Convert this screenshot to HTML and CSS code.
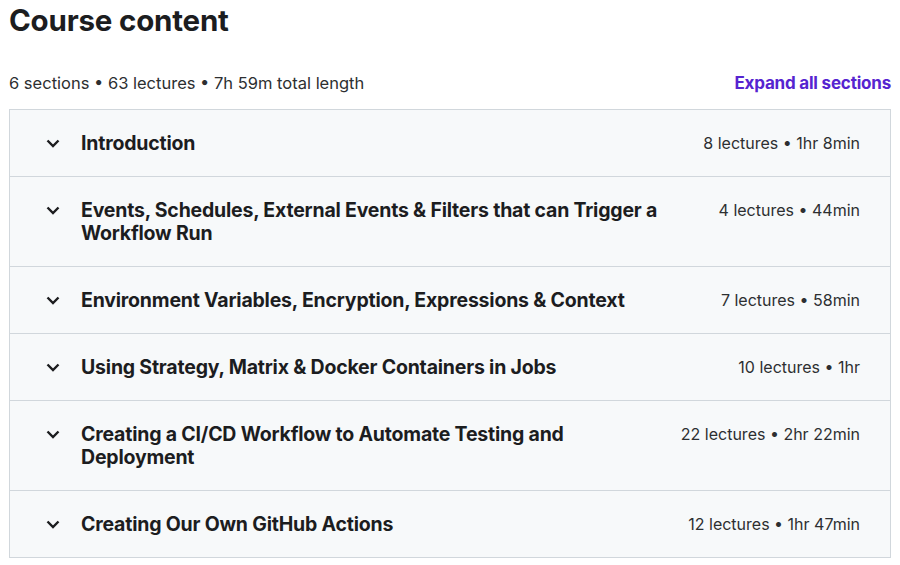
FILE: index.html
```html
<!DOCTYPE html>
<html>
<head>
<meta charset="utf-8">
<link rel="stylesheet" href="styles.css">
</head>
<body>
<div class="page">
  <h2 class="heading">Course content</h2>
  <div class="summary">
    <span class="stats">6 sections • 63 lectures • 7h 59m total length</span>
    <button class="expand">Expand all sections</button>
  </div>
  <div class="sections">
    <div class="section">
      <div class="left">
        <svg class="chev" viewBox="0 0 24 24"><path d="M6.5 9.5l5.5 5.5 5.5-5.5"/></svg>
        <span class="title">Introduction</span>
      </div>
      <span class="meta">8 lectures • 1hr 8min</span>
    </div>
    <div class="section">
      <div class="left">
        <svg class="chev" viewBox="0 0 24 24"><path d="M6.5 9.5l5.5 5.5 5.5-5.5"/></svg>
        <span class="title">Events, Schedules, External Events &amp; Filters that can Trigger a Workflow Run</span>
      </div>
      <span class="meta">4 lectures • 44min</span>
    </div>
    <div class="section">
      <div class="left">
        <svg class="chev" viewBox="0 0 24 24"><path d="M6.5 9.5l5.5 5.5 5.5-5.5"/></svg>
        <span class="title">Environment Variables, Encryption, Expressions &amp; Context</span>
      </div>
      <span class="meta">7 lectures • 58min</span>
    </div>
    <div class="section">
      <div class="left">
        <svg class="chev" viewBox="0 0 24 24"><path d="M6.5 9.5l5.5 5.5 5.5-5.5"/></svg>
        <span class="title">Using Strategy, Matrix &amp; Docker Containers in Jobs</span>
      </div>
      <span class="meta">10 lectures • 1hr</span>
    </div>
    <div class="section">
      <div class="left">
        <svg class="chev" viewBox="0 0 24 24"><path d="M6.5 9.5l5.5 5.5 5.5-5.5"/></svg>
        <span class="title">Creating a CI/CD Workflow to Automate Testing and Deployment</span>
      </div>
      <span class="meta">22 lectures • 2hr 22min</span>
    </div>
    <div class="section">
      <div class="left">
        <svg class="chev" viewBox="0 0 24 24"><path d="M6.5 9.5l5.5 5.5 5.5-5.5"/></svg>
        <span class="title">Creating Our Own GitHub Actions</span>
      </div>
      <span class="meta">12 lectures • 1hr 47min</span>
    </div>
  </div>
</div>
</body>
</html>
```
FILE: styles.css
```css
html, body {
  margin: 0;
  padding: 0;
  background: #ffffff;
}
body {
  font-family: Inter, "Noto Sans", sans-serif;
  color: #2d2f31;
}
.page {
  padding: 0 9px;
}
.heading {
  margin: 0;
  padding-top: 2px;
  font-size: 29.5px;
  line-height: 36px;
  font-weight: 700;
  letter-spacing: -0.2px;
  color: #1c1d1f;
}
.summary {
  display: flex;
  justify-content: space-between;
  align-items: center;
  margin-top: 33px;
  margin-bottom: 14px;
  height: 24px;
}
.stats {
  font-size: 16.5px;
}
.expand {
  border: 0;
  background: none;
  padding: 0;
  font-family: inherit;
  font-size: 17px;
  font-weight: 700;
  color: #5624d0;
  letter-spacing: -0.2px;
}
.sections {
  border: 1px solid #d1d7dc;
  border-bottom: 0;
}
.section {
  display: flex;
  align-items: flex-start;
  justify-content: space-between;
  background: #f7f9fa;
  border-bottom: 1px solid #d1d7dc;
  padding: 22px 30px 21px 31px;
}
.left {
  display: flex;
  align-items: flex-start;
  flex: 1;
}
.chev {
  width: 24px;
  height: 24px;
  flex: none;
  margin-top: -1px;
  margin-right: 16px;
  fill: none;
  stroke: #1c1d1f;
  stroke-width: 2.4;
}
.title {
  font-size: 19.5px;
  line-height: 23px;
  font-weight: 700;
  letter-spacing: -0.2px;
  color: #1c1d1f;
}
.meta {
  flex: none;
  margin-left: 48px;
  font-size: 16px;
  line-height: 23px;
  white-space: nowrap;
}
```
